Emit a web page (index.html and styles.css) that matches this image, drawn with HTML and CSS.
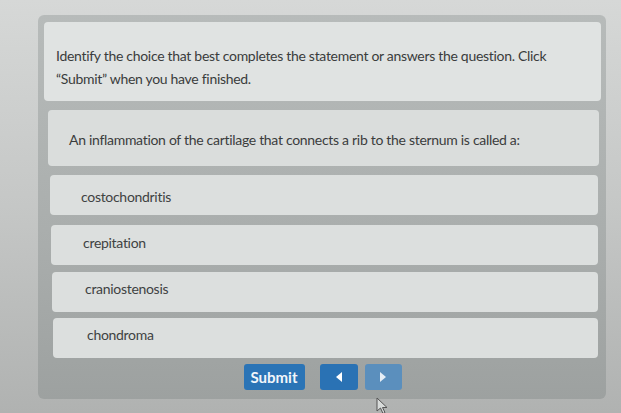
FILE: index.html
```html
<!DOCTYPE html>
<html>
<head>
<meta charset="utf-8">
<link rel="stylesheet" href="styles.css">
</head>
<body>
<div class="page">
  <div class="panel">
    <div class="card intro">Identify the choice that best completes the statement or answers the question. Click “Submit” when you have finished.</div>
    <div class="card question">An inflammation of the cartilage that connects a rib to the sternum is called a:</div>
    <div class="card option o1">costochondritis</div>
    <div class="card option o2">crepitation</div>
    <div class="card option o3">craniostenosis</div>
    <div class="card option o4">chondroma</div>
    <div class="actions">
      <button class="btn submit">Submit</button>
      <button class="btn nav prev"><svg width="10" height="12" viewBox="0 0 10 12"><path d="M8 1 L2 6 L8 11 Z" fill="#fff"/></svg></button>
      <button class="btn nav next"><svg width="10" height="12" viewBox="0 0 10 12"><path d="M2 1 L8 6 L2 11 Z" fill="#e6eef6"/></svg></button>
    </div>
  </div>
  <svg class="cursor" width="12" height="18" viewBox="0 0 12 18"><path d="M1 1 L1 14 L4.5 11 L7 16.5 L9 15.5 L6.5 10.5 L11 10.5 Z" fill="#d8dbda" stroke="#555" stroke-width="1"/></svg>
</div>
</body>
</html>
```
FILE: styles.css
```css
html, body {
  margin: 0;
  padding: 0;
}
body {
  width: 621px;
  height: 413px;
  overflow: hidden;
  background: linear-gradient(180deg, #d6d8d7 0%, #c5c7c6 50%, #b0b2b1 100%);
  font-family: "Lato", "Open Sans", sans-serif;
  font-variant-ligatures: none;
  color: #3a3c3c;
}
.page {
  position: relative;
  width: 621px;
  height: 413px;
  padding-top: 15px;
  box-sizing: border-box;
}
.panel {
  margin-left: 38px;
  width: 568px;
  height: 384px;
  box-sizing: border-box;
  padding: 7px 5px 0 6px;
  background: linear-gradient(180deg, #b7bbba 0%, #a9adac 60%, #9da1a0 100%);
  border-radius: 6px;
  display: flex;
  flex-direction: column;
}
.card {
  background: #dee1e0;
  border-radius: 4px;
  font-size: 14px;
  letter-spacing: -0.3px;
}
.intro {
  height: 79px;
  box-sizing: border-box;
  padding: 22px 40px 0 12px;
  line-height: 23px;
  background: #e0e3e2;
}
.question {
  margin-top: 9px;
  margin-left: 4px;
  margin-right: 2px;
  height: 56px;
  box-sizing: border-box;
  padding: 22px 0 0 21px;
  line-height: 16px;
  background: #dadddc;
}
.option {
  height: 40px;
  box-sizing: border-box;
  line-height: 16px;
  margin-right: 3px;
  background: #dcdfde;
  color: #404242;
}
.o1 { margin-top: 9px; margin-left: 6px; padding: 14px 0 0 31px; }
.o2 { margin-top: 10px; margin-left: 7px; padding: 10px 0 0 32px; }
.o3 { margin-top: 7px; margin-left: 8px; padding: 9px 0 0 33px; }
.o4 { margin-top: 6px; margin-left: 9px; padding: 9px 0 0 34px; }
.actions {
  margin-top: 6px;
  display: flex;
  justify-content: center;
  gap: 7px;
}
.btn {
  height: 26px;
  border: none;
  border-radius: 3px;
  display: flex;
  align-items: center;
  justify-content: center;
  padding: 0;
  font-family: "Lato", "Open Sans", sans-serif;
}
.submit {
  width: 61px;
  background: #2b74b6;
  color: #f2f6fa;
  font-weight: bold;
  font-size: 15px;
  margin-right: 8px;
}
.prev {
  width: 38px;
  background: #2a72b4;
}
.next {
  width: 37px;
  background: #5b8fbd;
}
.cursor {
  position: absolute;
  left: 376px;
  top: 397px;
}
```
